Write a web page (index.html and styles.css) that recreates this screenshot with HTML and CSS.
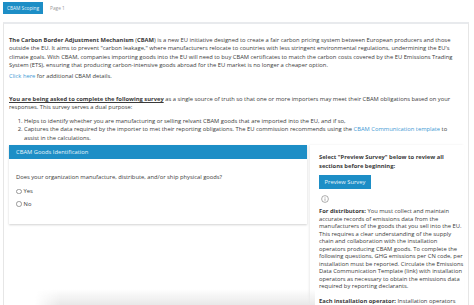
FILE: index.html
```html
<!DOCTYPE html>
<html>
<head>
<meta charset="utf-8">
<link rel="stylesheet" href="styles.css">
</head>
<body>
<div class="tabs">
  <span class="tab active">CBAM Scoping</span>
  <span class="tab">Page 1</span>
</div>
<div class="page">
  <p class="intro"><b>The Carbon Border Adjustment Mechanism</b> (<b>CBAM</b>) is a new EU initiative designed to create a fair carbon pricing system between European producers and those outside the EU. It aims to prevent "carbon leakage," where manufacturers relocate to countries with less stringent environmental regulations, undermining the EU's climate goals. With CBAM, companies importing goods into the EU will need to buy CBAM certificates to match the carbon costs covered by the EU Emissions Trading System (ETS), ensuring that producing carbon-intensive goods abroad for the EU market is no longer a cheaper option.</p>
  <p class="more"><a class="link" href="#">Click here</a> for additional CBAM details.</p>
  <p class="ask"><b class="u">You are being asked to complete the following survey</b> as a single source of truth so that one or more importers may meet their CBAM obligations based on your responses. This survey serves a dual purpose:</p>
  <ol class="purpose">
    <li>Helps to identify whether you are manufacturing or selling relvant CBAM goods that are imported into the EU, and if so,</li>
    <li>Captures the data required by the importer to met their reporting obligations. The EU commission recommends using the <a class="link" href="#">CBAM Communication template</a> to assist in the calculations.</li>
  </ol>
  <div class="row">
    <div class="survey">
      <div class="survey-head">CBAM Goods Identification</div>
      <div class="survey-body">
        <div class="question">Does your organization manufacture, distribute, and/or ship physical goods?</div>
        <label class="opt"><span class="radio"></span>Yes</label>
        <label class="opt no"><span class="radio"></span>No</label>
      </div>
    </div>
    <aside class="side">
      <div class="side-title">Select "Preview Survey" below to review all sections before beginning:</div>
      <button class="btn">Preview Survey</button>
      <div class="info"><svg width="8" height="8" viewBox="0 0 8 8"><circle cx="4" cy="4" r="3.4" fill="none" stroke="#777" stroke-width="0.6"/><rect x="3.7" y="3.4" width="0.6" height="2.4" fill="#777"/><circle cx="4" cy="2.4" r="0.4" fill="#777"/></svg></div>
      <p class="side-text"><b>For distributors:</b> You must collect and maintain accurate records of emissions data from the manufacturers of the goods that you sell into the EU. This requires a clear understanding of the supply chain and collaboration with the installation operators producing CBAM goods. To complete the following questions, GHG emissions per CN code, per installation must be reported. Circulate the Emissions Data Communication Template (link) with installation operators as necessary to obtain the emissions data required by reporting declarants.</p>
      <p class="side-text next"><b>Each installation operator:</b> Installation operators must report the direct and indirect emissions of each good.</p>
    </aside>
  </div>
</div>
<div class="fade"></div>
</body>
</html>
```
FILE: styles.css
```css
html, body {
  margin: 0;
  padding: 0;
  background: #fff;
  overflow: hidden;
}
body {
  font-family: "Open Sans", "Liberation Sans", sans-serif;
  color: #3a3a3a;
  font-size: 5.8px;
  line-height: 8.4px;
  height: 305px;
  position: relative;
}
.tabs {
  display: flex;
  align-items: center;
  gap: 7px;
  padding: 2px 0 0 3px;
  height: 12px;
}
.tab {
  font-size: 4.8px;
  color: #9a9a9a;
  line-height: 12px;
}
.tab.active {
  background: #1d8ec6;
  color: #e6f4fb;
  width: 40px;
  text-align: center;
}
.page {
  margin: 8px 5px 0 3px;
  border: 1px solid #e6e6e6;
  border-top: 2px solid #e8eaed;
  padding: 12px 4px 0 5px;
  height: 300px;
}
p { margin: 0; }
.more { margin-top: 2.4px; }
.link { color: #3d98d3; text-decoration: none; }
.ask { margin-top: 14.6px; }
.u { text-decoration: underline; }
.purpose {
  margin: 5px 0 0;
  padding: 0 14px 0 15px;
}
.row {
  display: flex;
  gap: 3px;
  margin-top: 3px;
  align-items: flex-start;
}
.survey {
  width: 298px;
  box-shadow: 0 1px 2px rgba(0,0,0,0.18);
  background: #fff;
  flex: none;
}
.survey-head {
  background: #1d8ec6;
  color: #e8f5fc;
  height: 14px;
  line-height: 14px;
  padding-left: 7px;
}
.survey-body {
  padding: 14px 7px 16px;
}
.opt {
  display: flex;
  align-items: center;
  margin-top: 6px;
  gap: 2px;
}
.opt.no { margin-top: 4px; }
.radio {
  width: 3.6px;
  height: 3.6px;
  border: 0.6px solid #999;
  border-radius: 50%;
  display: inline-block;
}
.side {
  width: 145px;
  flex: none;
  padding: 8px 0 0 9px;
  box-shadow: -1px 0 2px rgba(0,0,0,0.08);
  background: #fff;
  height: 170px;
}
.side-title {
  font-weight: bold;
  line-height: 8.7px;
  width: 130px;
}
.btn {
  margin-top: 5px;
  background: #1d8ec6;
  color: #e8f5fc;
  border: 0;
  font-family: inherit;
  font-size: 5.8px;
  height: 14px;
  width: 52px;
  padding: 0;
  display: block;
}
.info {
  margin-top: 6px;
  height: 8px;
  padding-left: 2px;
}
.side-text {
  margin-top: 5px;
  line-height: 7.5px;
}
.side-text.next { margin-top: 7px; }
.fade {
  position: absolute;
  left: 35px;
  width: 280px;
  bottom: 0;
  height: 16px;
  background: linear-gradient(to bottom, rgba(232,232,232,0), rgba(232,232,232,1));
  -webkit-mask-image: linear-gradient(to right, transparent, #000 25px);
}
```
